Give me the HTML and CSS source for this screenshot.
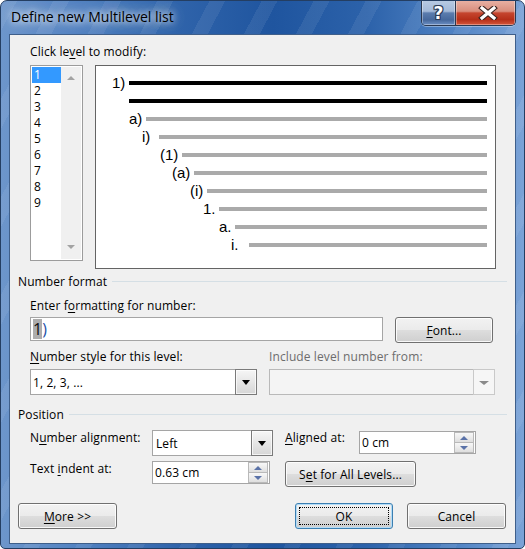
FILE: index.html
```html
<!DOCTYPE html>
<html>
<head>
<meta charset="utf-8">
<title>Define new Multilevel list</title>
<link rel="stylesheet" href="styles.css">
</head>
<body>
<div class="window">
  <div class="titlebar">
    <div class="title">Define new Multilevel list</div>
    <div class="caption-buttons">
      <div class="cbtn help"><span class="qmark">?</span></div>
      <div class="cbtn close">
        <svg class="xglyph" width="20" height="14" viewBox="0 0 20 14">
          <path d="M4 2 L16 12 M16 2 L4 12" stroke="#3b2420" stroke-width="5.4" stroke-linecap="square" fill="none"/>
          <path d="M4 2 L16 12 M16 2 L4 12" stroke="#ffffff" stroke-width="3.2" stroke-linecap="square" fill="none"/>
        </svg>
      </div>
    </div>
  </div>

  <div class="client">
    <div class="section">
      <div class="lbl">Click le<u>v</u>el to modify:</div>
      <div class="level-row">
        <div class="listbox">
          <div class="items">
            <div class="item sel">1</div>
            <div class="item">2</div>
            <div class="item">3</div>
            <div class="item">4</div>
            <div class="item">5</div>
            <div class="item">6</div>
            <div class="item">7</div>
            <div class="item">8</div>
            <div class="item">9</div>
          </div>
          <div class="vscroll"><span class="arr-up"></span><span class="arr-down"></span></div>
        </div>
        <div class="preview">
          <div class="prow" style="--pl:16px;--w:17px"><span class="plabel">1)</span><span class="pline black"></span></div>
          <div class="prow" style="--pl:33px;--w:0px"><span class="plabel"></span><span class="pline black"></span></div>
          <div class="prow" style="--pl:33px;--w:17px"><span class="plabel">a)</span><span class="pline"></span></div>
          <div class="prow" style="--pl:46px;--w:17px"><span class="plabel">i)</span><span class="pline"></span></div>
          <div class="prow" style="--pl:64px;--w:22px"><span class="plabel">(1)</span><span class="pline"></span></div>
          <div class="prow" style="--pl:76px;--w:22px"><span class="plabel">(a)</span><span class="pline"></span></div>
          <div class="prow" style="--pl:94px;--w:17px"><span class="plabel">(i)</span><span class="pline"></span></div>
          <div class="prow" style="--pl:107px;--w:16px"><span class="plabel">1.</span><span class="pline"></span></div>
          <div class="prow" style="--pl:123px;--w:16px"><span class="plabel">a.</span><span class="pline"></span></div>
          <div class="prow" style="--pl:135px;--w:18px"><span class="plabel">i.</span><span class="pline"></span></div>
        </div>
      </div>
    </div>

    <div class="grp grp-number"><span class="grp-title">Number format</span><span class="grp-line"></span></div>

    <div class="section">
      <div class="lbl lbl-enter">Enter f<u>o</u>rmatting for number:</div>
      <div class="edit-row">
        <div class="edit numfmt"><span class="field">1</span><span class="paren">)</span></div>
        <div class="btn btn-font"><u>F</u>ont...</div>
      </div>
      <div class="two-col">
        <div class="lbl"><u>N</u>umber style for this level:</div>
        <div class="lbl disabled">Include level number from:</div>
        <div class="combo">
          <span class="combo-text">1, 2, 3, ...</span>
          <span class="drop"><span class="tri"></span></span>
        </div>
        <div class="combo combo-disabled">
          <span class="combo-text"></span>
          <span class="drop"><span class="tri"></span></span>
        </div>
      </div>
    </div>

    <div class="grp grp-position"><span class="grp-title">Position</span><span class="grp-line"></span></div>

    <div class="section">
      <div class="pos-grid">
        <div class="lbl c1">N<u>u</u>mber alignment:</div>
        <div class="combo combo-left c2">
          <span class="combo-text">Left</span>
          <span class="drop"><span class="tri"></span></span>
        </div>
        <div class="lbl c4"><u>A</u>ligned at:</div>
        <div class="spin spin-aligned c5">
          <span class="spin-text">0 cm</span>
          <span class="spin-btns"><span class="sb"><span class="s-up"></span></span><span class="sb"><span class="s-down"></span></span></span>
        </div>
        <div class="lbl c1">Text <u>i</u>ndent at:</div>
        <div class="spin spin-indent c2">
          <span class="spin-text">0.63 cm</span>
          <span class="spin-btns"><span class="sb"><span class="s-up"></span></span><span class="sb"><span class="s-down"></span></span></span>
        </div>
        <div class="btn btn-setall c45">S<u>e</u>t for All Levels...</div>
      </div>
    </div>

    <div class="bottom-row">
      <div class="btn btn-more"><u>M</u>ore &gt;&gt;</div>
      <div class="spacer"></div>
      <div class="btn btn-ok default"><span class="focus">OK</span></div>
      <div class="btn btn-cancel">Cancel</div>
    </div>
  </div>
</div>
</body>
</html>
```

FILE: styles.css
```css
* { box-sizing: border-box; }
html, body { margin: 0; padding: 0; background: #ffffff; }
body {
  font-family: "Open Sans", "Noto Sans", sans-serif;
  font-size: 12px;
  line-height: 15px;
  letter-spacing: 0.1px;
  color: #000;
}
u { text-decoration: underline; text-underline-offset: 2px; text-decoration-thickness: 1px; }

.window {
  width: 525px;
  height: 549px;
  border: 1px solid #243e62;
  border-radius: 7px 7px 5px 5px;
  overflow: hidden;
  display: flex;
  flex-direction: column;
  background:
    repeating-linear-gradient(118deg, rgba(255,255,255,0.07) 0 14px, rgba(255,255,255,0) 14px 46px),
    linear-gradient(90deg, #6d96cb 0%, #5383c2 14%, #2f63aa 34%, #1f559f 52%, #2c62aa 70%, #5385c5 88%, #7ba3d7 100%);
}

.titlebar {
  height: 34px;
  flex: none;
  display: flex;
  align-items: flex-start;
}
.title {
  padding: 7px 0 0 10px;
  font-size: 14px;
  line-height: 18px;
  letter-spacing: 0;
  color: #000;
  text-shadow: 0 0 6px rgba(255,255,255,0.95), 0 0 12px rgba(255,255,255,0.8), 0 0 18px rgba(255,255,255,0.5);
}
.caption-buttons {
  margin-left: auto;
  margin-right: 8px;
  margin-top: -1px;
  height: 26px;
  display: flex;
  border: 1px solid #2a3850;
  border-top: none;
  border-radius: 0 0 5px 5px;
  overflow: hidden;
  box-shadow: 0 1px 0 rgba(255,255,255,0.35);
}
.cbtn {
  height: 25px;
  display: flex;
  align-items: center;
  justify-content: center;
  box-shadow: inset 0 0 0 1px rgba(255,255,255,0.35);
}
.help {
  width: 34px;
  border-right: 1px solid #2a3850;
  background: linear-gradient(180deg, #b9cbe3 0%, #a3b9d8 45%, #5b7cad 52%, #46689c 80%, #6d90c4 100%);
}
.close {
  width: 59px;
  background: linear-gradient(180deg, #e9b3a6 0%, #d98e7d 45%, #c5452e 52%, #b52f19 78%, #d4563b 100%);
}
.qmark {
  font-family: "DejaVu Sans", sans-serif;
  font-weight: bold;
  font-size: 17px;
  line-height: 20px;
  color: #fff;
  margin-top: 1px;
  text-shadow: 1px 0 0 #2d3c58, -1px 0 0 #2d3c58, 0 1px 0 #2d3c58, 0 -1px 0 #2d3c58, 1px 1px 0 #2d3c58, -1px -1px 0 #2d3c58, 1px -1px 0 #2d3c58, -1px 1px 0 #2d3c58;
}
.xglyph { display: block; margin-left: 4px; }

.client {
  margin: 0 9px 0 9px;
  width: 505px;
  height: 508px;
  flex: none;
  background: #f0f0f0;
  box-shadow: 0 0 0 1px #3f5f8a;
  padding-top: 9px;
}

.section { padding-left: 20px; }
.lbl { white-space: nowrap; }
.disabled { color: #6d6d6d; }

.level-row {
  margin-top: 6px;
  display: flex;
  align-items: flex-start;
  gap: 12px;
}
.listbox {
  width: 53px;
  height: 196px;
  border: 1px solid #9c9c9c;
  background: #fff;
  padding: 1px;
  display: flex;
}
.items { width: 29px; }
.item {
  height: 16px;
  line-height: 16px;
  padding-left: 2px;
}
.item.sel { background: #3399ff; color: #fff; }
.vscroll {
  width: 20px;
  background: #f0f0f0;
  display: flex;
  flex-direction: column;
  justify-content: space-between;
  align-items: center;
  padding: 9px 0 10px 0;
}
.arr-up, .arr-down {
  width: 0; height: 0;
  border-left: 4.5px solid transparent;
  border-right: 4.5px solid transparent;
}
.arr-up { border-bottom: 4px solid #a3a3a3; }
.arr-down { border-top: 4px solid #a3a3a3; }

.preview {
  width: 401px;
  height: 204px;
  border: 1px solid #646464;
  background: #fff;
  padding: 8px 8px 0 0;
}
.prow {
  height: 18px;
  display: flex;
  align-items: center;
  padding-left: var(--pl);
}
.plabel {
  width: var(--w);
  flex: none;
  font-family: "Liberation Sans", Arial, sans-serif;
  font-size: 15px;
  line-height: 18px;
  letter-spacing: 0;
  white-space: nowrap;
  overflow: visible;
}
.pline { flex: 1; height: 4px; background: #aaaaaa; }
.pline.black { background: #000; }

.grp {
  display: flex;
  align-items: center;
  padding-left: 8px;
  padding-right: 8px;
  height: 15px;
}
.grp-line { flex: 1; height: 1px; background: #d5dfe5; margin-left: 5px; }
.grp-number { margin-top: 5px; }
.grp-position { margin-top: 12px; }

.lbl-enter { margin-top: 9px; }
.edit-row {
  margin-top: 4px;
  display: flex;
  align-items: flex-start;
  gap: 12px;
}
.edit {
  width: 353px;
  height: 24px;
  border: 1px solid #a5a5a5;
  background: #fff;
  padding: 0 0 0 2px;
  display: flex;
  align-items: center;
  font-size: 16px;
  line-height: 20px;
  letter-spacing: 0;
}
.field { background: #adadad; color: #111; padding: 0; }
.paren { color: #1e4fa6; }

.btn {
  height: 26px;
  border: 1px solid #707070;
  border-radius: 3px;
  background: linear-gradient(180deg, #f2f2f2 0%, #ebebeb 48%, #dddddd 52%, #cfcfcf 100%);
  box-shadow: inset 0 0 0 1px rgba(255,255,255,0.85);
  display: flex;
  align-items: center;
  justify-content: center;
  white-space: nowrap;
  line-height: 15px;
}
.btn-font { width: 98px; }
.btn-setall { width: 131px; }
.btn-more { width: 99px; }
.btn-ok { width: 98px; }
.btn-cancel { width: 99px; margin-left: 14px; }
.btn.default {
  border-color: #3c7fb1;
  box-shadow: inset 0 0 0 1px #b2dcf7;
}
.focus {
  width: 90px;
  height: 18px;
  border: 1px dotted #000;
  display: flex;
  align-items: center;
  justify-content: center;
}

.two-col {
  margin-top: 6px;
  display: grid;
  grid-template-columns: 227px 226px;
  column-gap: 12px;
  row-gap: 5px;
}
.combo {
  height: 26px;
  border: 1px solid #a5a5a5;
  background: #fff;
  display: flex;
  align-items: stretch;
}
.combo-text { flex: 1; padding-left: 2px; display: flex; align-items: center; }
.drop {
  width: 22px;
  border: 1px solid #7a7a7a;
  margin: -1px -1px -1px 0;
  background: linear-gradient(180deg, #f6f6f6 0%, #e6e6e6 50%, #d6d6d6 100%);
  box-shadow: inset 0 0 0 1px rgba(255,255,255,0.7);
  display: flex;
  align-items: center;
  justify-content: center;
}
.tri {
  width: 0; height: 0;
  border-left: 4.5px solid transparent;
  border-right: 4.5px solid transparent;
  border-top: 5px solid #000;
  margin-top: 1px;
}
.combo-disabled { background: #f4f4f4; border-color: #b9b9b9; }
.combo-disabled .drop {
  border-color: #c9c9c9;
  background: #f6f6f6;
  box-shadow: none;
}
.combo-disabled .tri { border-top-color: #8a8a8a; border-top-width: 4px; border-left-width: 5px; border-right-width: 5px; }

.pos-grid {
  margin-top: 8px;
  display: grid;
  grid-template-columns: 122px 121px 12px 74px 117px;
  grid-template-rows: 26px 26px;
  row-gap: 5px;
  align-items: start;
}
.c1 { grid-column: 1; }
.c2 { grid-column: 2; }
.c4 { grid-column: 4; }
.c5 { grid-column: 5; }
.c45 { grid-column: 4 / 6; }
.combo-left .combo-text { padding-left: 3px; }

.spin {
  height: 23px;
  border: 1px solid #a5a5a5;
  background: #fff;
  display: flex;
  align-items: stretch;
}
.spin-aligned { width: 117px; margin-top: 1px; }
.spin-indent { width: 118px; }
.spin-text { flex: 1; padding-left: 2px; display: flex; align-items: center; }
.spin-btns {
  width: 20px;
  margin: 0 1px 0 0;
  display: flex;
  flex-direction: column;
}
.sb {
  flex: 1;
  border: 1px solid #b9b9b9;
  background: linear-gradient(180deg, #f7f7f7 0%, #ececec 50%, #dedede 100%);
  display: flex;
  align-items: center;
  justify-content: center;
}
.sb + .sb { border-top: none; }
.s-up, .s-down {
  width: 0; height: 0;
  border-left: 4px solid transparent;
  border-right: 4px solid transparent;
}
.s-up { border-bottom: 4px solid #5a72a8; }
.s-down { border-top: 4px solid #5a72a8; }

.bottom-row {
  margin-top: 16px;
  display: flex;
  padding-left: 8px;
  padding-right: 9px;
}
.spacer { flex: 1; }
```
